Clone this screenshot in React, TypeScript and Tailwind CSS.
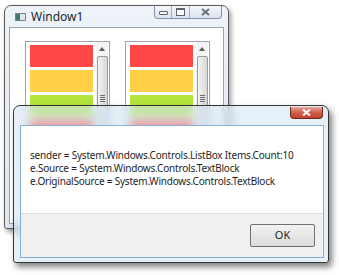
import React from 'react'

// ── Data ───────────────────────────────────────────
const itemColors = [
  'bg-[#ff4747]',
  'bg-[#ffcf48]',
  'bg-[#b2e43c]',
  'bg-[#ff4747]',
  'bg-[#ffcf48]',
  'bg-[#b2e43c]',
  'bg-[#ff4747]',
  'bg-[#ffcf48]',
  'bg-[#b2e43c]',
  'bg-[#ff4747]',
]

const messageLines = [
  'sender = System.Windows.Controls.ListBox Items.Count:10',
  'e.Source = System.Windows.Controls.TextBlock',
  'e.OriginalSource = System.Windows.Controls.TextBlock',
]

// ── Scroll bar ─────────────────────────────────────
const ScrollBar = () => (
  <div className="flex w-[12px] flex-col items-center bg-[#f4f4f4]">
    <div className="flex h-[14px] w-full items-center justify-center">
      <svg width="6" height="4" viewBox="0 0 6 4">
        <path d="M0 4 L3 0 L6 4 Z" fill="#5a5a5a" />
      </svg>
    </div>
    <div className="flex h-[84px] w-[11px] flex-col items-center justify-center gap-[1px] rounded-[2px] border border-[#9b9b9b] bg-gradient-to-r from-[#f3f3f3] to-[#d8d8d8]">
      <div className="h-px w-[5px] bg-[#6a6a6a]" />
      <div className="h-px w-[5px] bg-[#6a6a6a]" />
      <div className="h-px w-[5px] bg-[#6a6a6a]" />
      <div className="h-px w-[5px] bg-[#6a6a6a]" />
    </div>
  </div>
)

// ── List box ───────────────────────────────────────
const ListBox = () => (
  <div className="flex h-[190px] w-[85px] gap-[3px] border border-[#9ca3ad] bg-white pl-[4px] pr-[1px]">
    <div className="flex flex-1 flex-col gap-[3px] pt-[3px]">
      {itemColors.map((c, i) => (
        <div key={i} className={`h-[22px] shrink-0 ${c}`} />
      ))}
    </div>
    <ScrollBar />
  </div>
)

// ── Caption buttons (inactive window) ──────────────
const CaptionButtons = () => (
  <div className="absolute right-[6px] top-0 flex h-[13px] overflow-hidden rounded-b-[4px] border border-t-0 border-[#8594ab] bg-gradient-to-b from-[#f4f7fb] to-[#dbe4ef]">
    <div className="flex w-[17px] items-center justify-center border-r border-[#a3b0c2]">
      <div className="mt-[2px] h-[4px] w-[9px] rounded-[1px] border border-[#5c6470] bg-white" />
    </div>
    <div className="flex w-[18px] items-center justify-center border-r border-[#a3b0c2]">
      <div className="h-[8px] w-[9px] border border-t-[2px] border-[#5c6470] bg-white" />
    </div>
    <div className="flex w-[31px] items-center justify-center">
      <svg width="9" height="8" viewBox="0 0 9 8">
        <path d="M1 1 L8 7 M8 1 L1 7" stroke="#6a7380" strokeWidth="2" />
      </svg>
    </div>
  </div>
)

// ── Main window ────────────────────────────────────
const MainWindow = () => (
  <div className="absolute left-[4px] top-[5px] flex h-[224px] w-[225px] flex-col rounded-t-[7px] rounded-b-[3px] border border-[#5b5b5b] bg-gradient-to-b from-[#eef3f9] to-[#dfe6ee] px-[4px] pb-[4px] shadow-[2px_3px_5px_rgba(0,0,0,0.4)]">
    <CaptionButtons />
    <div className="flex h-[21px] items-center gap-[5px] pl-[6px]">
      <div className="flex h-[8px] w-[11px] border border-[#7a8590] bg-[#dfe7ef]">
        <div className="w-[4px] bg-[#3f7f6a]" />
      </div>
      <span className="text-[12px] leading-none text-[#1c2733]">Window1</span>
    </div>
    <div className="flex flex-1 gap-[15px] overflow-hidden border border-[#9aa4b0] bg-white pl-[15px] pt-[13px]">
      <ListBox />
      <ListBox />
    </div>
  </div>
)

// ── Message box ────────────────────────────────────
const MessageBox = () => (
  <div className="absolute left-[13px] top-[105px] flex h-[158px] w-[316px] flex-col rounded-t-[7px] rounded-b-[3px] border border-[#353535] bg-[#cfe4f4]/55 pb-[4px] pl-[6px] pr-[4px] shadow-[3px_4px_6px_rgba(0,0,0,0.5)] backdrop-blur-[4px]">
    <div className="absolute right-[5px] top-[1px] flex h-[12px] w-[33px] items-center justify-center rounded-b-[4px] border border-t-0 border-[#6f2a22] bg-gradient-to-b from-[#e9a598] via-[#d0604f] to-[#c2402d]">
      <svg width="9" height="7" viewBox="0 0 9 7">
        <path d="M1 0.5 L8 6.5 M8 0.5 L1 6.5" stroke="#ffffff" strokeWidth="2" />
      </svg>
    </div>
    <div className="h-[19px] shrink-0" />
    <div className="flex flex-1 flex-col border border-[#8ab1d4] bg-white">
      <div className="flex flex-1 flex-col pl-[9px] pt-[23px] text-[10px] leading-[13px] tracking-[-0.2px] text-[#1e1e1e]">
        {messageLines.map((line) => (
          <div key={line} className="whitespace-nowrap">
            {line}
          </div>
        ))}
      </div>
      <div className="flex h-[44px] items-center justify-end border-t border-[#dfdfdf] bg-[#f0f0f0] pr-[8px]">
        <button className="h-[23px] w-[65px] rounded-[2px] border border-[#707070] bg-gradient-to-b from-[#f2f2f2] to-[#dcdcdc] text-[11px] text-[#1e1e1e]">
          OK
        </button>
      </div>
    </div>
  </div>
)

// ── App ────────────────────────────────────────────
export default function App() {
  return (
    <div className="relative h-[275px] w-[339px] overflow-hidden bg-white font-['Noto_Sans',sans-serif]">
      <MainWindow />
      <MessageBox />
    </div>
  )
}
